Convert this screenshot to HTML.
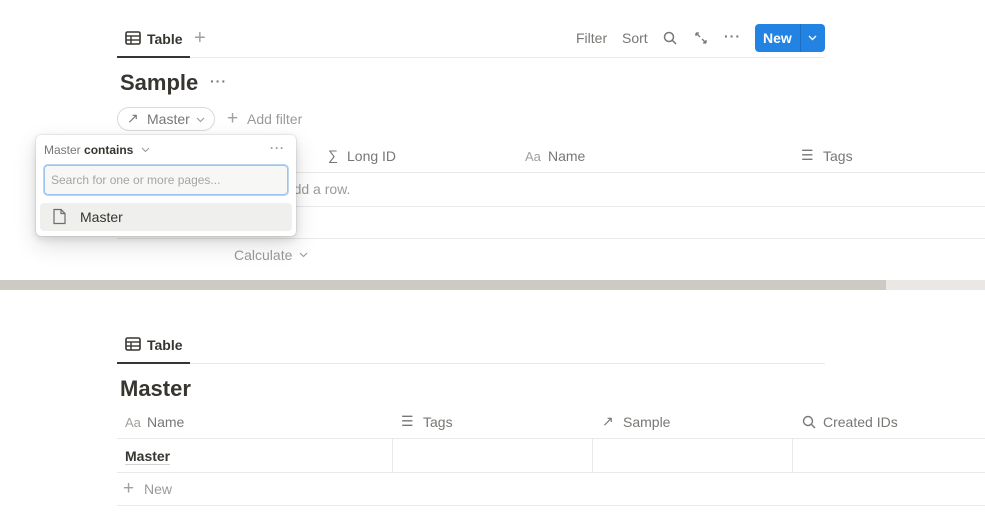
<!DOCTYPE html>
<html><head><style>
*{margin:0;padding:0;box-sizing:border-box}
body{width:985px;height:526px;background:#fff;font-family:"Liberation Sans",sans-serif;color:#37352f;position:relative;overflow:hidden;font-size:14px}
.a{position:absolute;white-space:nowrap}
.g{color:#787774}
.line{position:absolute;height:1px;background:#e9e9e7}
.vl{position:absolute;width:1px;background:#e9e9e7}
</style></head><body>
<svg class="a" style="left:125px;top:31px" width="16" height="14" viewBox="0 0 16 14"><rect x="1" y="1" width="14" height="12" rx="1.5" fill="none" stroke="#37352f" stroke-width="1.6"/><line x1="1" y1="5" x2="15" y2="5" stroke="#37352f" stroke-width="1.4"/><line x1="1" y1="9" x2="15" y2="9" stroke="#37352f" stroke-width="1.4"/><line x1="6" y1="5" x2="6" y2="13" stroke="#37352f" stroke-width="1.4"/></svg>
<div class="a" style="left:147px;top:31px;font-size:14px;font-weight:600">Table</div>
<div class="a g" style="left:194px;top:27px;font-size:20px;color:#a0a09c">+</div>
<div class="line" style="left:117px;top:57px;width:708px"></div>
<div class="a" style="left:117px;top:56px;width:73px;height:2px;background:#37352f"></div>
<div class="a g" style="left:576px;top:30px">Filter</div>
<div class="a g" style="left:622px;top:30px">Sort</div>
<svg class="a" style="left:663px;top:31px" width="14" height="14" viewBox="0 0 14 14"><circle cx="6" cy="6" r="4.5" fill="none" stroke="#787774" stroke-width="1.5"/><line x1="9.3" y1="9.3" x2="13" y2="13" stroke="#787774" stroke-width="1.5"/></svg>
<svg class="a" style="left:694px;top:31px" width="14" height="14" viewBox="0 0 14 14"><path d="M2 2L6 6M2 2V5M2 2H5M12 12L8 8M12 12V9M12 12H9" fill="none" stroke="#787774" stroke-width="1.3"/></svg>
<div class="a g" style="left:724px;top:28px;font-weight:700;letter-spacing:1px">···</div>
<div class="a" style="left:755px;top:24px;width:70px;height:28px;background:#2383e2;border-radius:4px"></div>
<div class="a" style="left:763px;top:30px;color:#fff;font-weight:700;font-size:14px">New</div>
<div class="a" style="left:800px;top:24px;width:1px;height:28px;background:#1a6fc4"></div>
<svg class="a" style="left:808px;top:35px" width="9" height="6" viewBox="0 0 9 6"><path d="M1 1L4.5 4.5L8 1" fill="none" stroke="#fff" stroke-width="1.4"/></svg>
<div class="a" style="left:120px;top:70px;font-size:22px;font-weight:700">Sample</div>
<div class="a g" style="left:210px;top:73px;font-weight:700;letter-spacing:1px">···</div>
<div class="a" style="left:117px;top:107px;width:98px;height:24px;border:1px solid #d9d9d6;border-radius:12px"></div>
<div class="a g" style="left:127px;top:110px;font-size:14px">↗</div>
<div class="a g" style="left:147px;top:111px">Master</div>
<svg class="a" style="left:196px;top:117px" width="9" height="6" viewBox="0 0 9 6"><path d="M1 1L4.5 4.5L8 1" fill="none" stroke="#9b9a97" stroke-width="1.1"/></svg>
<div class="a g" style="left:227px;top:108px;font-size:19px;color:#a0a09c">+</div>
<div class="a" style="left:247px;top:111px;color:#9b9a97">Add filter</div>
<div class="a g" style="left:328px;top:147px">∑</div>
<div class="a g" style="left:347px;top:148px">Long ID</div>
<div class="a" style="left:525px;top:149px;color:#a0a09c;font-size:13px">Aa</div>
<div class="a g" style="left:548px;top:148px">Name</div>
<div class="a g" style="left:801px;top:147px">☰</div>
<div class="a g" style="left:823px;top:148px">Tags</div>
<div class="line" style="left:117px;top:172px;width:868px"></div>
<div class="a" style="left:236px;top:181px;color:#9b9a97;font-size:14px">Click to add a row.</div>
<div class="line" style="left:117px;top:206px;width:868px"></div>
<div class="line" style="left:117px;top:238px;width:868px"></div>
<div class="a" style="left:234px;top:247px;color:#9b9a97">Calculate</div>
<svg class="a" style="left:299px;top:252px" width="9" height="6" viewBox="0 0 9 6"><path d="M1 1L4.5 4.5L8 1" fill="none" stroke="#9b9a97" stroke-width="1.1"/></svg>
<div class="a" style="left:36px;top:135px;width:260px;height:101px;background:#fff;border-radius:5px;box-shadow:0 0 0 1px rgba(15,15,15,.06),0 3px 8px rgba(15,15,15,.12),0 9px 24px rgba(15,15,15,.14)"></div>
<div class="a" style="left:44px;top:143px;font-size:12px;color:#787774">Master <span style="color:#37352f;font-weight:600">contains</span></div>
<svg class="a" style="left:141px;top:147px" width="9" height="6" viewBox="0 0 9 6"><path d="M1 1L4.5 4.5L8 1" fill="none" stroke="#9b9a97" stroke-width="1.1"/></svg>
<div class="a" style="left:270px;top:141px;color:#9b9a97;font-weight:700;letter-spacing:1px;font-size:12px">···</div>
<div class="a" style="left:44px;top:165px;width:244px;height:30px;background:#f7f7f5;border:1px solid #9cc4ee;border-radius:4px;box-shadow:0 0 0 1px #b9d5f2"></div>
<div class="a" style="left:51px;top:173px;font-size:12px;color:#a5a5a2">Search for one or more pages...</div>
<div class="a" style="left:40px;top:203px;width:252px;height:28px;background:#efefee;border-radius:4px"></div>
<svg class="a" style="left:52px;top:208px" width="15" height="17" viewBox="0 0 15 17"><path d="M2 1.5H9L13 5.5V15.5H2Z M9 1.5V5.5H13" fill="none" stroke="#6e6d69" stroke-width="1.2"/></svg>
<div class="a" style="left:80px;top:209px">Master</div>
<div class="a" style="left:0;top:280px;width:886px;height:10px;background:#cdcac3"></div>
<div class="a" style="left:886px;top:280px;width:99px;height:10px;background:#e9e8e4"></div>
<svg class="a" style="left:125px;top:337px" width="16" height="14" viewBox="0 0 16 14"><rect x="1" y="1" width="14" height="12" rx="1.5" fill="none" stroke="#37352f" stroke-width="1.6"/><line x1="1" y1="5" x2="15" y2="5" stroke="#37352f" stroke-width="1.4"/><line x1="1" y1="9" x2="15" y2="9" stroke="#37352f" stroke-width="1.4"/><line x1="6" y1="5" x2="6" y2="13" stroke="#37352f" stroke-width="1.4"/></svg>
<div class="a" style="left:147px;top:337px;font-weight:600">Table</div>
<div class="line" style="left:117px;top:363px;width:708px"></div>
<div class="a" style="left:117px;top:362px;width:73px;height:2px;background:#37352f"></div>
<div class="a" style="left:120px;top:376px;font-size:22px;font-weight:700">Master</div>
<div class="a" style="left:125px;top:415px;color:#a0a09c;font-size:13px">Aa</div>
<div class="a g" style="left:147px;top:414px">Name</div>
<div class="a g" style="left:401px;top:413px">☰</div>
<div class="a g" style="left:423px;top:414px">Tags</div>
<div class="a g" style="left:602px;top:413px">↗</div>
<div class="a g" style="left:623px;top:414px">Sample</div>
<svg class="a" style="left:802px;top:415px" width="14" height="14" viewBox="0 0 14 14"><circle cx="6" cy="6" r="4.5" fill="none" stroke="#787774" stroke-width="1.4"/><line x1="9.3" y1="9.3" x2="13" y2="13" stroke="#787774" stroke-width="1.4"/></svg>
<div class="a g" style="left:823px;top:414px">Created IDs</div>
<div class="line" style="left:117px;top:438px;width:868px"></div>
<div class="vl" style="left:392px;top:439px;height:33px"></div>
<div class="vl" style="left:592px;top:439px;height:33px"></div>
<div class="vl" style="left:792px;top:439px;height:33px"></div>
<div class="a" style="left:125px;top:448px;font-weight:600;border-bottom:1px solid #d3d2cf;line-height:16px">Master</div>
<div class="line" style="left:117px;top:472px;width:868px"></div>
<div class="a" style="left:123px;top:478px;font-size:19px;color:#a0a09c">+</div>
<div class="a" style="left:144px;top:481px;color:#9b9a97">New</div>
<div class="line" style="left:117px;top:505px;width:868px"></div>
</body></html>
